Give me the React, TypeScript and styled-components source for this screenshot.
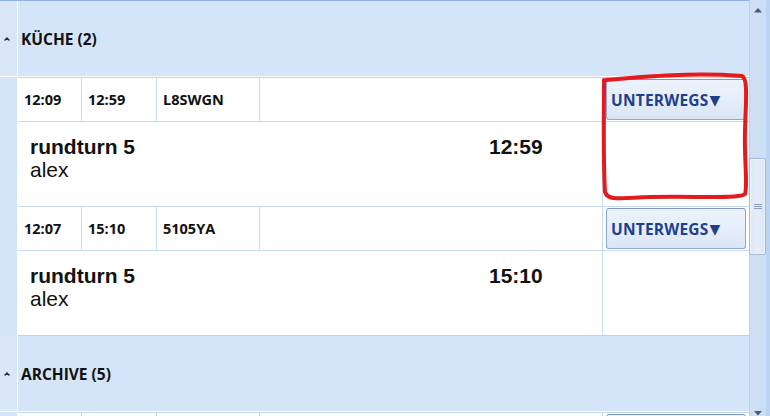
import React from "react";
import styled, { createGlobalStyle } from "styled-components";

const Global = createGlobalStyle`
  html, body { margin: 0; padding: 0; background: #ffffff; overflow: hidden; }
  body { font-family: "Open Sans", "Noto Sans", sans-serif; }
  * { box-sizing: border-box; }
`;

const LINE = "#c9dbf2";

const Frame = styled.div`
  position: relative;
  width: 770px;
  height: 416px;
  overflow: hidden;
  display: flex;
  align-items: flex-start;
  background: #ffffff;
`;

const Grid = styled.div`
  width: 749px;
  flex-shrink: 0;
  display: flex;
  flex-direction: column;
  border-top: 1px solid #8eb0e2;
`;

const GroupHeader = styled.div`
  display: flex;
  height: 76px;
  border-bottom: 1px solid #ffffff;
  background: #d4e5f9;
`;

const HeaderGutter = styled.div`
  width: 18px;
  flex-shrink: 0;
  border-right: 1px solid #ffffff;
  background: #d9e6f6;
  display: flex;
  align-items: center;
  padding-left: 4px;
`;

const HeaderTitle = styled.div`
  display: flex;
  align-items: center;
  padding-left: 3px;
  font-weight: 700;
  font-size: 15.5px;
  color: #111111;
`;

const Body = styled.div`
  display: flex;
`;

const BodyGutter = styled.div`
  width: 18px;
  flex-shrink: 0;
  border-right: 1px solid #ffffff;
  background: #d3e3f8;
`;

const Rows = styled.div`
  flex: 1;
  display: flex;
  flex-direction: column;
  border-top: 1px solid #c3d5ec;
`;

const DataRow = styled.div`
  display: grid;
  grid-template-columns: 64px 75px 103px 343px 146px;
  height: 44px;
  border-bottom: 1px solid ${LINE};
`;

const Cell = styled.div`
  display: flex;
  align-items: center;
  padding-left: 6px;
  border-right: 1px solid ${LINE};
  font-weight: 700;
  font-size: 14.5px;
  color: #111111;
`;

const ButtonCell = styled.div`
  display: flex;
  align-items: flex-start;
  padding: 1px 0 0 3px;
`;

const StatusButton = styled.button`
  width: 140px;
  height: 41px;
  display: flex;
  align-items: center;
  padding: 0 0 0 4px;
  border: 1px solid #8ea8d3;
  border-top-color: #7f98c4;
  border-radius: 3px;
  background: linear-gradient(#ebf2fc 0%, #e6eefa 50%, #d9e5f5 100%);
  font-family: "Open Sans", "Noto Sans", sans-serif;
  font-weight: 700;
  font-size: 15.5px;
  letter-spacing: 0.2px;
  color: #1d3f8e;
  cursor: pointer;
`;

const Arrow = styled.span`
  font-family: "DejaVu Sans", sans-serif;
  font-size: 14px;
  margin-left: 1px;
`;

const DetailRow = styled.div<{ $last?: boolean }>`
  display: grid;
  grid-template-columns: 585px 146px;
  height: 85px;
  border-bottom: 1px solid ${(p) => (p.$last ? "#c4d0de" : LINE)};
`;

const DetailMain = styled.div`
  display: grid;
  grid-template-columns: 459px auto;
  padding: 13px 0 0 12px;
  border-right: 1px solid ${LINE};
  font-family: "Liberation Sans", Arial, sans-serif;
  font-size: 21px;
  line-height: 23px;
  color: #111111;
`;

const Title = styled.div`
  font-weight: 700;
`;

const Person = styled.div`
  font-weight: 400;
`;

const Time = styled.div`
  font-weight: 700;
`;

const ScrollBar = styled.div`
  width: 17px;
  height: 424px;
  flex-shrink: 0;
  display: flex;
  flex-direction: column;
  background: #cedff5;
  box-shadow: inset 1px 0 0 #c0d2ea;
`;

const ArrowBox = styled.div`
  height: 21px;
  display: flex;
  align-items: center;
  justify-content: center;
  padding-left: 1px;
`;

const Track = styled.div`
  flex: 1;
`;

const Thumb = styled.div<{ $top: number }>`
  margin-top: ${(p) => p.$top}px;
  width: 17px;
  height: 97px;
  border: 1px solid #a3badc;
  border-radius: 2px;
  background: linear-gradient(90deg, #dbe7f8, #e6eefa 50%, #d8e5f6);
  box-shadow: inset 0 0 0 1px #eef4fc;
  display: flex;
  flex-direction: column;
  align-items: center;
  justify-content: center;
  gap: 1px;
`;

const Grip = styled.div`
  width: 8px;
  height: 1px;
  background: #8ba2c8;
`;

const RightEdge = styled.div`
  width: 4px;
  height: 416px;
  flex-shrink: 0;
  background: #bcd4f4;
`;

const Annotation = styled.svg`
  position: absolute;
  left: 0;
  top: 0;
  pointer-events: none;
`;

type Entry = { start: string; end: string; code: string; title: string; person: string; time: string; status: string };

const kueche: Entry[] = [
  { start: "12:09", end: "12:59", code: "L8SWGN", title: "rundturn 5", person: "alex", time: "12:59", status: "UNTERWEGS" },
  { start: "12:07", end: "15:10", code: "5105YA", title: "rundturn 5", person: "alex", time: "15:10", status: "UNTERWEGS" },
];

/* the archive row is scrolled mostly out of view: only its top edge shows */
const archive: Entry[] = [{ start: "", end: "", code: "", title: "", person: "", time: "", status: "" }];

const Caret = () => (
  <svg width="6" height="4" viewBox="0 0 6 4">
    <path d="M0.6 3.4 L3 1 L5.4 3.4" fill="none" stroke="#1f2d52" strokeWidth="1.4" />
  </svg>
);

const Tri = ({ down }: { down?: boolean }) => (
  <svg width="8" height="5" viewBox="0 0 8 5">
    <path d={down ? "M0 0 H8 L4 4.5 Z" : "M0 4.5 H8 L4 0 Z"} fill="#4a5878" />
  </svg>
);

const Group = ({ title, entries, showDetails }: { title: string; entries: Entry[]; showDetails: boolean }) => (
  <>
    <GroupHeader>
      <HeaderGutter>
        <Caret />
      </HeaderGutter>
      <HeaderTitle>{title}</HeaderTitle>
    </GroupHeader>
    <Body>
      <BodyGutter />
      <Rows>
        {entries.map((e, i) => (
          <React.Fragment key={i}>
            <DataRow>
              <Cell>{e.start}</Cell>
              <Cell>{e.end}</Cell>
              <Cell>{e.code}</Cell>
              <Cell />
              <ButtonCell>
                <StatusButton>
                  {e.status && (
                    <>
                      {e.status}
                      <Arrow>▼</Arrow>
                    </>
                  )}
                </StatusButton>
              </ButtonCell>
            </DataRow>
            {showDetails && (
              <DetailRow $last={i === entries.length - 1}>
                <DetailMain>
                  <div>
                    <Title>{e.title}</Title>
                    <Person>{e.person}</Person>
                  </div>
                  <Time>{e.time}</Time>
                </DetailMain>
                <div />
              </DetailRow>
            )}
          </React.Fragment>
        ))}
      </Rows>
    </Body>
  </>
);

export default function App() {
  return (
    <>
      <Global />
      <Frame>
        <Grid>
          <Group title="KÜCHE (2)" entries={kueche} showDetails />
          <Group title="ARCHIVE (5)" entries={archive} showDetails={false} />
        </Grid>
        <ScrollBar>
          <ArrowBox>
            <Tri />
          </ArrowBox>
          <Track>
            <Thumb $top={137}>
              <Grip />
              <Grip />
              <Grip />
            </Thumb>
          </Track>
          <ArrowBox>
            <Tri down />
          </ArrowBox>
        </ScrollBar>
        <RightEdge />
        <Annotation width="770" height="416" viewBox="0 0 770 416">
          <path
            d="M606 80 C640 77 690 72 742 76 C748 78 746 100 745 130 C744 160 748 185 745 194 C741 199 700 196 650 197 C620 198 608 201 605 192 C603 160 604 120 604 80"
            fill="none"
            stroke="#e31b1f"
            strokeWidth="4"
            strokeLinecap="round"
            strokeLinejoin="round"
          />
        </Annotation>
      </Frame>
    </>
  );
}
